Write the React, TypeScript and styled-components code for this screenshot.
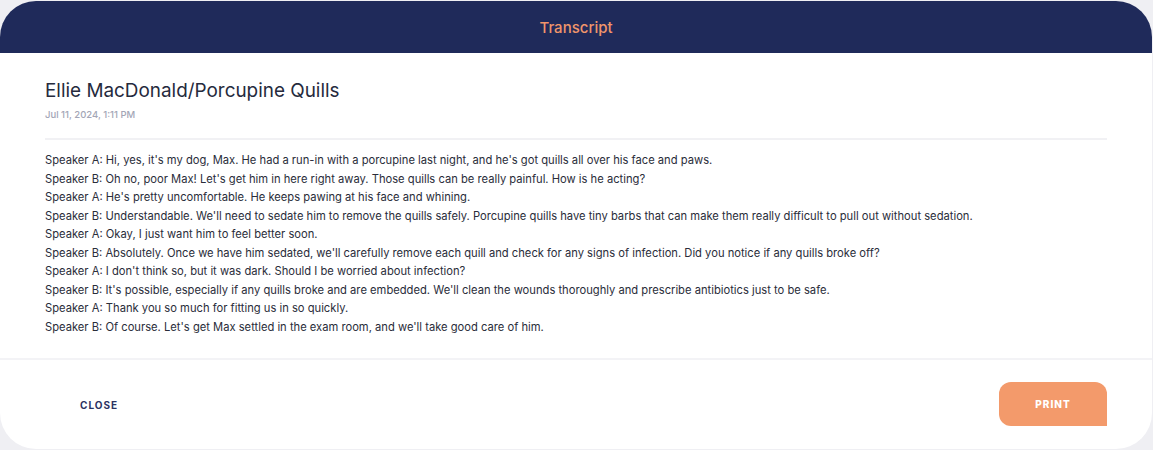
import React from "react";
import styled, { createGlobalStyle } from "styled-components";

const Global = createGlobalStyle`
  html, body { margin: 0; padding: 0; background: #efeff3; }
  body { font-family: "Inter", "Noto Sans", sans-serif; }
  * { box-sizing: border-box; }
`;

const Modal = styled.div`
  width: 1152px;
  height: 448px;
  margin-top: 1px;
  background: #ffffff;
  border-radius: 36px;
  overflow: hidden;
  display: flex;
  flex-direction: column;
`;

const Header = styled.div`
  height: 52px;
  flex: none;
  background: #1f2a5a;
  display: flex;
  align-items: center;
  justify-content: center;
  color: #f0956a;
  font-size: 15px;
  font-weight: 500;
  padding-top: 1px;
`;

const Body = styled.div`
  padding: 26px 45px 0;
  flex: 1;
`;

const Title = styled.h1`
  margin: 0;
  font-size: 18.9px;
  font-weight: 400;
  color: #252a3d;
  line-height: 24px;
`;

const DateLine = styled.div`
  margin-top: 5px;
  font-size: 9.5px;
  font-weight: 500;
  color: #a3a6b6;
  line-height: 14px;
`;

const Divider = styled.hr`
  margin: 16px 0 11px;
  border: none;
  height: 2px;
  background: #f1f1f4;
`;

const Lines = styled.div`
  display: flex;
  flex-direction: column;
`;

const Line = styled.div`
  font-size: 11.2px;
  line-height: 18.5px;
  color: #2a2d3a;
  white-space: nowrap;
`;

const Footer = styled.div`
  height: 91px;
  flex: none;
  border-top: 2px solid #f3f3f6;
  display: flex;
  align-items: center;
  justify-content: space-between;
  padding: 0 45px 0 80px;
`;

const CloseButton = styled.button`
  background: none;
  border: none;
  padding: 0;
  font-family: inherit;
  font-size: 10px;
  font-weight: 700;
  letter-spacing: 1px;
  color: #2b3362;
  cursor: pointer;
`;

const PrintButton = styled.button`
  width: 108px;
  height: 44px;
  border: none;
  border-radius: 12px 12px 0 12px;
  background: #f39a6b;
  color: #ffffff;
  font-family: inherit;
  font-size: 10px;
  font-weight: 800;
  letter-spacing: 1px;
  cursor: pointer;
  margin-top: -2px;
`;

const transcript = [
  "Speaker A: Hi, yes, it's my dog, Max. He had a run-in with a porcupine last night, and he's got quills all over his face and paws.",
  "Speaker B: Oh no, poor Max! Let's get him in here right away. Those quills can be really painful. How is he acting?",
  "Speaker A: He's pretty uncomfortable. He keeps pawing at his face and whining.",
  "Speaker B: Understandable. We'll need to sedate him to remove the quills safely. Porcupine quills have tiny barbs that can make them really difficult to pull out without sedation.",
  "Speaker A: Okay, I just want him to feel better soon.",
  "Speaker B: Absolutely. Once we have him sedated, we'll carefully remove each quill and check for any signs of infection. Did you notice if any quills broke off?",
  "Speaker A: I don't think so, but it was dark. Should I be worried about infection?",
  "Speaker B: It's possible, especially if any quills broke and are embedded. We'll clean the wounds thoroughly and prescribe antibiotics just to be safe.",
  "Speaker A: Thank you so much for fitting us in so quickly.",
  "Speaker B: Of course. Let's get Max settled in the exam room, and we'll take good care of him.",
];

export default function App() {
  return (
    <>
      <Global />
      <Modal>
        <Header>Transcript</Header>
        <Body>
          <Title>Ellie MacDonald/Porcupine Quills</Title>
          <DateLine>Jul 11, 2024, 1:11 PM</DateLine>
          <Divider />
          <Lines>
            {transcript.map((t, i) => (
              <Line key={i}>{t}</Line>
            ))}
          </Lines>
        </Body>
        <Footer>
          <CloseButton>CLOSE</CloseButton>
          <PrintButton>PRINT</PrintButton>
        </Footer>
      </Modal>
    </>
  );
}
